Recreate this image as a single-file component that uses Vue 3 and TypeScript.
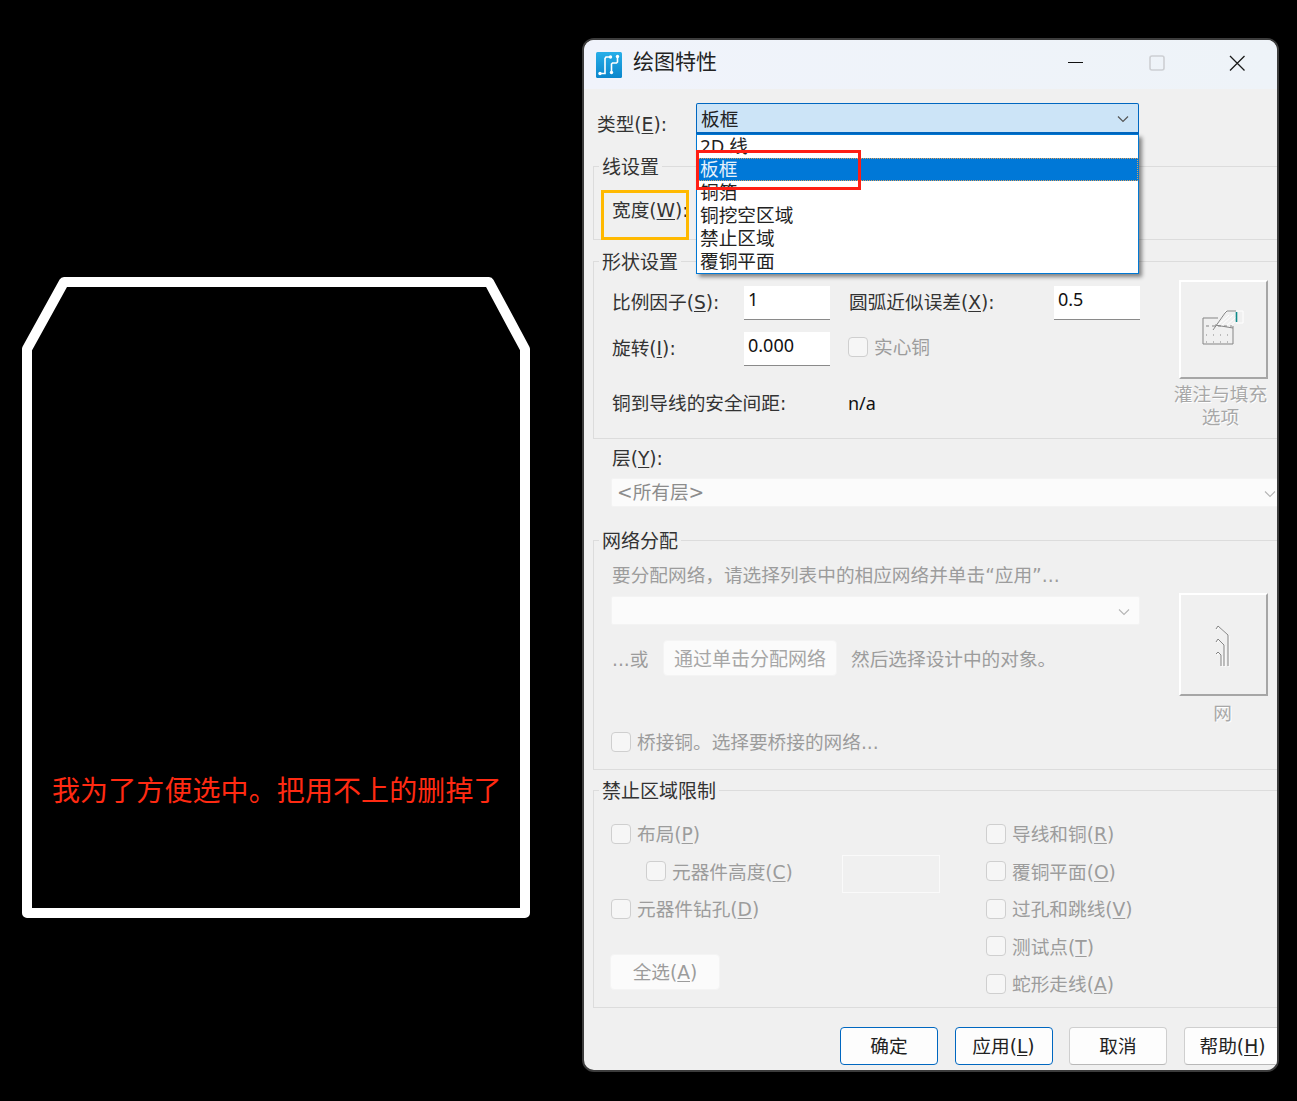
<script setup lang="ts">
interface Opt { text: string; key: string; extra?: string }

const typeOptions = ['2D 线', '板框', '铜箔', '铜挖空区域', '禁止区域', '覆铜平面']
const selectedType = '板框'

const leftRestrict: Opt[] = [
  { text: '布局', key: 'P' },
  { text: '元器件高度', key: 'C', extra: 'indent' },
  { text: '元器件钻孔', key: 'D' },
]
const rightRestrict: Opt[] = [
  { text: '导线和铜', key: 'R' },
  { text: '覆铜平面', key: 'O' },
  { text: '过孔和跳线', key: 'V' },
  { text: '测试点', key: 'T' },
  { text: '蛇形走线', key: 'A' },
]
</script>

<template>
  <main class="desk">
    <section class="canvas">
      <svg class="outline" width="560" height="940" viewBox="0 0 560 940">
        <path d="M27 349 L64 282 L489 282 L525 349 L525 913 L27 913 Z" fill="none" stroke="#fff" stroke-width="10" stroke-linejoin="round" />
      </svg>
      <p class="note">我为了方便选中。把用不上的删掉了</p>
    </section>

    <section class="window">
      <header class="titlebar">
        <svg class="app-icon" width="26" height="26" viewBox="0 0 26 26">
          <defs>
            <linearGradient id="appg" x1="0" y1="0" x2="0" y2="1">
              <stop offset="0" stop-color="#27aee8" />
              <stop offset="1" stop-color="#0a86cc" />
            </linearGradient>
          </defs>
          <rect width="26" height="26" rx="1.5" fill="url(#appg)" />
          <path d="M4 21.5H9V6.5L10 5H14M21.5 4.5V10L20.5 11H16.5L15.5 12V20" fill="none" stroke="#fff" stroke-width="1.6" />
          <circle cx="4" cy="21.5" r="1.7" fill="#fff" />
          <circle cx="14.5" cy="5" r="1.7" fill="#fff" />
          <circle cx="21.5" cy="4.5" r="1.7" fill="#fff" />
          <circle cx="15.5" cy="20.5" r="1.7" fill="#fff" />
        </svg>
        <h1 class="title">绘图特性</h1>
        <svg class="win-ctl minimize" width="16" height="16" viewBox="0 0 16 16"><path d="M0 7.5H15" stroke="#111" stroke-width="1" /></svg>
        <svg class="win-ctl maximize" width="16" height="16" viewBox="0 0 16 16"><rect x="1" y="1" width="14" height="14" rx="2" fill="none" stroke="#cdcfd3" stroke-width="1.6" /></svg>
        <svg class="win-ctl close" width="16" height="16" viewBox="0 0 16 16"><path d="M1 1L15.5 15.5M15.5 1L1 15.5" stroke="#1a1a1a" stroke-width="1.3" /></svg>
      </header>

      <div class="body">
        <div class="type-row">
          <span class="type-label">类型(<u>E</u>):</span>
          <div class="combo-open">
            <span class="combo-value">{{ selectedType }}</span>
            <svg class="chev" width="12" height="8" viewBox="0 0 12 8"><path d="M1 1.5L6 6.5L11 1.5" fill="none" stroke="#555" stroke-width="1.2" /></svg>
            <ul class="dropdown">
              <li v-for="o in typeOptions" :key="o" :class="{ selected: o === selectedType }">{{ o }}</li>
            </ul>
          </div>
        </div>

        <fieldset class="group line-group">
          <legend>线设置</legend>
          <span class="label">宽度(<u>W</u>):</span>
        </fieldset>

        <fieldset class="group shape-group">
          <legend>形状设置</legend>
          <div class="shape-form">
            <span class="label">比例因子(<u>S</u>):</span>
            <div class="input">1</div>
            <span class="label label-x">圆弧近似误差(<u>X</u>):</span>
            <div class="input">0.5</div>
            <span class="label">旋转(<u>I</u>):</span>
            <div class="input">0.000</div>
            <span class="check solid"><i class="box"></i><span class="muted">实心铜</span></span>
            <span></span>
            <span class="label clearance-label">铜到导线的安全间距:</span>
            <span class="clearance-value">n/a</span>
          </div>
          <div class="img-col">
            <div class="img-btn fill-btn">
              <svg width="85" height="95" viewBox="2 2 85 95">
                <path d="M34 50L46 33V31H64V43H57" fill="none" stroke="#fff" stroke-width="1" />
                <path d="M39 45L50 35M42 46L54 35M46 47L57 37M49 48L57 41" fill="none" stroke="#fff" stroke-width="1" />
                <g fill="none" stroke="#858585" stroke-width="1">
                  <path d="M39 38H24V64H54V46" />
                  <path d="M34 50L46 33L48 31H57" />
                  <path d="M36 45L54 48" />
                  <path d="M27 46H53" stroke-dasharray="3 3" />
                  <path d="M27 55H53M27 62H53" stroke-dasharray="1 6" />
                </g>
                <path d="M57.5 32V42" stroke="#0e8a8a" stroke-width="1.6" />
              </svg>
            </div>
            <div class="caption fill-caption">灌注与填充<br />选项</div>
          </div>
        </fieldset>

        <div class="label layer-label">层(<u>Y</u>):</div>
        <div class="combo disabled layer-combo">
          <span>&lt;所有层&gt;</span>
          <svg class="chev layer-chev" width="12" height="8" viewBox="0 0 12 8"><path d="M1 1.5L6 6.5L11 1.5" fill="none" stroke="#b5b5b5" stroke-width="1.1" /></svg>
        </div>

        <fieldset class="group net-group">
          <legend>网络分配</legend>
          <div class="net-main">
            <div class="muted net-hint">要分配网络，请选择列表中的相应网络并单击“应用”...</div>
            <div class="combo disabled net-combo">
              <svg class="chev" width="12" height="8" viewBox="0 0 12 8"><path d="M1 1.5L6 6.5L11 1.5" fill="none" stroke="#b5b5b5" stroke-width="1.1" /></svg>
            </div>
            <div class="assign-row">
              <span class="muted or-label">...或</span>
              <div class="flat-btn assign-btn">通过单击分配网络</div>
              <span class="muted assign-tail">然后选择设计中的对象。</span>
            </div>
            <span class="check bridge"><i class="box"></i><span class="muted">桥接铜。选择要桥接的网络...</span></span>
          </div>
          <div class="img-col net-col">
            <div class="img-btn net-btn">
              <svg width="85" height="99" viewBox="2 2 85 99">
                <g fill="none" stroke="#fff" stroke-width="1" transform="translate(1 1)">
                  <path d="M49 73V42L39 33L37 36M45 73V52L39 46L37 49M42 73V62L39 59L37 61" />
                </g>
                <g fill="none" stroke="#858585" stroke-width="1">
                  <path d="M49 73V42L39 33L37 36M45 73V52L39 46L37 49M42 73V62L39 59L37 61" />
                </g>
              </svg>
            </div>
            <div class="caption net-caption">网</div>
          </div>
        </fieldset>

        <fieldset class="group restrict-group">
          <legend>禁止区域限制</legend>
          <div class="restrict-grid">
            <div class="restrict-left">
              <span v-for="o in leftRestrict" :key="o.key" class="check" :class="o.extra">
                <i class="box"></i><span class="muted">{{ o.text }}(<u>{{ o.key }}</u>)</span>
              </span>
              <div class="flat-btn select-all"><span class="muted">全选(<u>A</u>)</span></div>
            </div>
            <div class="height-box"></div>
            <div class="restrict-right">
              <span v-for="o in rightRestrict" :key="o.text" class="check">
                <i class="box"></i><span class="muted">{{ o.text }}(<u>{{ o.key }}</u>)</span>
              </span>
            </div>
          </div>
        </fieldset>

        <footer class="actions">
          <button class="btn primary">确定</button>
          <button class="btn primary">应用(<u>L</u>)</button>
          <button class="btn">取消</button>
          <button class="btn">帮助(<u>H</u>)</button>
        </footer>
      </div>

      <div class="mark mark-red"></div>
      <div class="mark mark-orange"></div>
    </section>
  </main>
</template>

<style>
html, body { margin: 0; background: #000; }
</style>

<style scoped>
.desk {
  position: relative;
  width: 1297px;
  height: 1101px;
  overflow: hidden;
  background: #000;
  font-family: "DejaVu Sans", "Noto Sans CJK SC", sans-serif;
}
.canvas { position: absolute; left: 0; top: 0; width: 560px; height: 940px; }
.outline { display: block; }
.note {
  position: absolute;
  left: 52px;
  top: 772px;
  margin: 0;
  color: #ff2a12;
  font-size: 28px;
  letter-spacing: 0.1px;
  line-height: 40px;
  white-space: nowrap;
}
.window {
  position: absolute;
  left: 582px;
  top: 38px;
  width: 697px;
  height: 1034px;
  box-sizing: border-box;
  border: 2px solid #3c3c3c;
  border-radius: 12px;
  background: #f0f0f0;
  overflow: hidden;
  color: #333;
  font-size: 18.67px;
}
.titlebar {
  display: flex;
  align-items: center;
  height: 49px;
  padding-left: 12px;
  background: linear-gradient(90deg, #f0f3fb, #eef3f8);
}
.app-icon { flex: none; margin-top: 1px; }
.title {
  flex: none;
  width: 435px;
  margin: 0 0 6px 11px;
  font-size: 21px;
  font-weight: 400;
  line-height: 30px;
  color: #222;
}
.win-ctl { flex: none; margin-bottom: 3px; }
.maximize { margin-left: 65px; }
.close { margin-left: 64px; }
.body { display: flex; flex-direction: column; padding-left: 9px; }
.type-row { display: flex; height: 31px; margin-top: 14px; }
.type-label { width: 103px; padding-left: 4px; box-sizing: border-box; margin-top: 10px; line-height: 24px; white-space: nowrap; }
.combo-open {
  position: relative;
  z-index: 5;
  display: flex;
  align-items: center;
  width: 443px;
  height: 31px;
  box-sizing: border-box;
  padding-left: 4px;
  border: 1px solid #0067c0;
  border-bottom-width: 2px;
  border-radius: 2px 2px 0 0;
  background: #cce4f7;
  color: #222;
  font-family: "Noto Sans", "Noto Sans CJK SC", sans-serif;
}
.combo-value { line-height: 28px; padding-top: 1px; }
.chev { position: absolute; right: 9px; top: 50%; margin-top: -3px; }
.dropdown {
  position: absolute;
  left: -1px;
  top: 30px;
  width: 443px;
  box-sizing: border-box;
  margin: 0;
  padding: 0;
  list-style: none;
  background: #fff;
  border: 1px solid #0078d4;
  box-shadow: 3px 3px 4px rgba(0, 0, 0, 0.45);
  color: #222;
}
.dropdown li { height: 23px; line-height: 22px; padding-left: 3px; white-space: nowrap; }
.dropdown li.selected {
  background: #0078d7;
  color: #e6f1fb;
  outline: 1px dotted #d8a060;
  outline-offset: -1px;
}
.group {
  display: flex;
  min-width: 0;
  margin: 0;
  padding: 0 0 0 18px;
  border: 1px solid #dcdcdc;
  border-right: 0;
}
.group legend {
  margin-left: -13px;
  padding: 2px 3px 0;
  font-size: 19px;
  line-height: 22px;
  color: #333;
}
.label { line-height: 24px; white-space: nowrap; }
.muted { color: #9c9c9c; white-space: nowrap; }
.check .muted { margin-top: -3px; }
u { text-decoration-thickness: 1px; text-underline-offset: 2px; }
.line-group { margin-top: 20px; height: 86px; box-sizing: border-box; padding-top: 21px; padding-bottom: 16px; }
.shape-group { margin-top: 9px; height: 190px; box-sizing: border-box; padding-top: 7px; }
.shape-form {
  display: grid;
  grid-template-columns: 132px 86px 224px 86px;
  grid-template-rows: 34px 34px 24px;
  row-gap: 12px;
  margin: 6px 39px 0 0;
  width: 528px;
  flex: none;
  align-items: center;
}
.label-x { padding-left: 19px; }
.input {
  height: 34px;
  box-sizing: border-box;
  padding: 0 4px;
  line-height: 26px;
  background: #fff;
  border-bottom: 1px solid #8a8a8a;
  color: #111;
  font-family: "Noto Sans", sans-serif;
  font-size: 18px;
}
.check { display: inline-flex; align-items: center; height: 24px; gap: 6px; }
.box {
  display: block;
  flex: none;
  width: 20px;
  height: 20px;
  box-sizing: border-box;
  border: 1px solid #cfcfcf;
  border-radius: 4px;
  background: #f6f6f6;
  margin-top: -1px;
}
.solid { padding-left: 18px; align-self: start; margin-top: 3px; }
.clearance-label { grid-row: 3; grid-column: 1 / 3; align-self: start; margin-top: 14px; }
.clearance-value { grid-row: 3; grid-column: 3; align-self: start; padding-left: 18px; margin-top: 13px; color: #111; font-family: "Noto Sans", sans-serif; font-size: 18px; line-height: 24px; }
.img-col { flex: none; width: 89px; }
.img-btn {
  width: 89px;
  box-sizing: border-box;
  border: 2px solid;
  border-color: #fff #a6a6a6 #a6a6a6 #fff;
}
.img-btn svg { display: block; }
.fill-btn { height: 99px; }
.net-btn { height: 103px; }
.caption {
  color: #a8a8a8;
  text-align: center;
  line-height: 23px;
  text-shadow: 1px 1px 0 #fff;
  white-space: nowrap;
}
.fill-caption { margin: 4px 0 0 -6px; width: 95px; }
.net-caption { margin-top: 6px; margin-left: -2px; }
.layer-label { margin: 8px 0 0 19px; }
.combo {
  position: relative;
  height: 29px;
  box-sizing: border-box;
  line-height: 28px;
  border-radius: 2px;
}
.combo.disabled { background: #fbfbfb; border: 1px solid #f3f3f3; color: #8c8c8c; }
.layer-combo { width: 669px; margin: 7px 0 0 18px; padding-left: 5px; }
.layer-chev { right: 3px; }
.net-group { margin-top: 21px; height: 242px; box-sizing: border-box; padding-top: 11px; }
.net-main { flex: none; width: 529px; margin-left: -1px; margin-right: 39px; display: flex; flex-direction: column; }
.net-hint { height: 24px; line-height: 26px; padding-left: 1px; }
.net-combo { margin-top: 9px; width: 529px; }
.net-combo .chev { right: 9px; }
.assign-row { display: flex; align-items: center; margin-top: 15px; padding-left: 1px; height: 36px; }
.or-label { flex: none; width: 51px; margin-top: -2px; }
.assign-tail { margin-top: -2px; }
.flat-btn { box-sizing: border-box; background: #fbfbfb; border: 1px solid #f4f4f4; border-radius: 4px; text-align: center; }
.assign-btn { flex: none; width: 174px; height: 36px; line-height: 36px; margin-right: 14px; color: #a6a6a6; font-size: 19px; white-space: nowrap; }
.bridge { margin-top: 54px; }
.net-col { margin-top: 30px; }
.restrict-group { margin-top: 8px; height: 230px; box-sizing: border-box; padding-top: 20px; }
.restrict-grid { display: flex; margin-left: -1px; }
.restrict-left { flex: none; width: 231px; display: flex; flex-direction: column; align-items: flex-start; gap: 13.5px; }
.indent { padding-left: 35px; }
.select-all { width: 110px; height: 36px; line-height: 35px; margin-top: 19.5px; margin-left: -1px; }
.height-box { flex: none; width: 98px; height: 38px; box-sizing: border-box; margin-top: 33px; border: 1px solid #fafafa; }
.restrict-right { flex: none; margin-left: 46px; display: flex; flex-direction: column; gap: 13.5px; }
.actions { display: flex; gap: 16.5px; margin: 19px 0 0 247px; }
.btn {
  flex: none;
  width: 98px;
  height: 38px;
  padding: 1px 0 0;
  box-sizing: border-box;
  border: 1px solid #cfcfcf;
  border-bottom-color: #b8b8b8;
  border-radius: 4px;
  background: #fdfdfd;
  color: #222;
  font-family: inherit;
  font-size: 18.67px;
  line-height: 34px;
  white-space: nowrap;
}
.btn.primary { border: 1.5px solid #0067c0; }
.mark { position: absolute; box-sizing: border-box; border-style: solid; border-width: 3px; pointer-events: none; z-index: 6; }
.mark-red { left: 112px; top: 110px; width: 165px; height: 40px; border-color: #ff1f14; }
.mark-orange { left: 17px; top: 150px; width: 88px; height: 50px; border-color: #ffb900; }
</style>
